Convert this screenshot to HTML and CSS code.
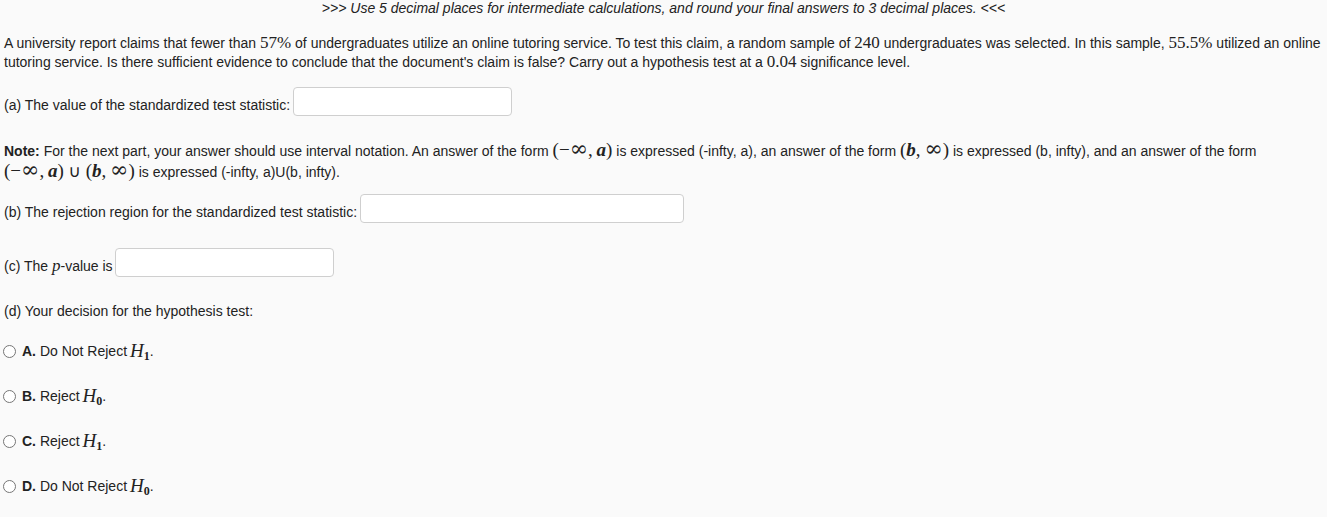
FILE: index.html
```html
<!DOCTYPE html>
<html>
<head>
<meta charset="utf-8">
<link rel="stylesheet" href="styles.css">
</head>
<body>
<div class="page">
  <div class="hint">&gt;&gt;&gt; Use 5 decimal places for intermediate calculations, and round your final answers to 3 decimal places. &lt;&lt;&lt;</div>
  <p class="para">A university report claims that fewer than <span class="m">57%</span> of undergraduates utilize an online tutoring service. To test this claim, a random sample of <span class="m">240</span> undergraduates was selected. In this sample, <span class="m">55.5%</span> utilized an online tutoring service. Is there sufficient evidence to conclude that the document's claim is false? Carry out a hypothesis test at a <span class="m">0.04</span> significance level.</p>

  <div class="row row-a">
    <span class="lbl">(a) The value of the standardized test statistic:</span>
    <span class="box box-a"></span>
  </div>

  <p class="note"><b>Note:</b> For the next part, your answer should use interval notation. An answer of the form <span class="m mx">(−<span class="inf">∞</span>,&thinsp;<i>a</i>)</span> is expressed (-infty, a), an answer of the form <span class="m mx">(<i>b</i>,&thinsp;<span class="inf">∞</span>)</span> is expressed (b, infty), and an answer of the form <span class="m mx">(−<span class="inf">∞</span>,&thinsp;<i>a</i>) <span class="cup">∪</span> (<i>b</i>,&thinsp;<span class="inf">∞</span>)</span> is expressed (-infty, a)U(b, infty).</p>

  <div class="row row-b">
    <span class="lbl">(b) The rejection region for the standardized test statistic:</span>
    <span class="box box-b"></span>
  </div>

  <div class="row row-c">
    <span class="lbl">(c) The <span class="mi">p</span>-value is</span>
    <span class="box box-c"></span>
  </div>

  <div class="part-d">(d) Your decision for the hypothesis test:</div>

  <ul class="opts">
    <li class="opt"><span class="radio"></span><b>A.</b>&nbsp;Do Not Reject <span class="h"><i>H</i><sub>1</sub></span>.</li>
    <li class="opt"><span class="radio"></span><b>B.</b>&nbsp;Reject <span class="h"><i>H</i><sub>0</sub></span>.</li>
    <li class="opt"><span class="radio"></span><b>C.</b>&nbsp;Reject <span class="h"><i>H</i><sub>1</sub></span>.</li>
    <li class="opt"><span class="radio"></span><b>D.</b>&nbsp;Do Not Reject <span class="h"><i>H</i><sub>0</sub></span>.</li>
  </ul>
</div>
</body>
</html>
```

FILE: styles.css
```css
html, body {
  margin: 0;
  padding: 0;
  background: #fafafa;
}
body {
  font-family: "Liberation Sans", Arial, sans-serif;
  font-size: 14px;
  color: #222;
}
.page {
  padding: 0 4px;
}
.hint {
  text-align: center;
  font-style: italic;
  line-height: 16px;
  height: 16px;
}
.para {
  margin: 18px 0 0;
  line-height: 19px;
}
.m {
  font-family: "Liberation Serif", "DejaVu Serif", serif;
  font-size: 17px;
  line-height: 1;
  white-space: nowrap;
}
.mx {
  font-size: 19px;
}
.mx i {
  font-weight: bold;
}
.inf {
  font-family: "DejaVu Serif", serif;
  font-size: 22px;
  line-height: 0;
}
.cup {
  font-family: "DejaVu Sans", sans-serif;
  font-size: 17px;
  line-height: 0;
}
.mi {
  font-family: "Liberation Serif", serif;
  font-style: italic;
  font-size: 17px;
  line-height: 1;
}
.row {
  display: flex;
  align-items: center;
}
.lbl {
  margin-top: 6px;
}
.box {
  display: block;
  height: 27px;
  border: 1px solid #cfcfcf;
  border-radius: 4px;
  background: #fff;
  margin-left: 3px;
  box-sizing: content-box;
}
.row-a { margin-top: 15px; }
.box-a { width: 217px; }
.note {
  margin: 24px 0 0;
  line-height: 20px;
}
.row-b { margin-top: 12px; }
.box-b { width: 322px; }
.row-c { margin-top: 25px; }
.box-c { width: 217px; margin-left: 2px; }
.part-d {
  margin-top: 25px;
  line-height: 19px;
}
.opts {
  list-style: none;
  margin: 18px 0 0;
  padding: 0;
}
.opt {
  display: flex;
  align-items: center;
  height: 24px;
  margin-bottom: 21px;
}
.radio {
  width: 11px;
  height: 11px;
  border: 1px solid #767676;
  border-radius: 50%;
  background: #fff;
  margin: 0 6px 0 -1px;
  flex: none;
}
.h {
  font-family: "Liberation Serif", serif;
  font-size: 19px;
  line-height: 1;
  margin-left: 3px;
}
.h sub {
  font-size: 12px;
  font-weight: bold;
  vertical-align: -3px;
}
```
